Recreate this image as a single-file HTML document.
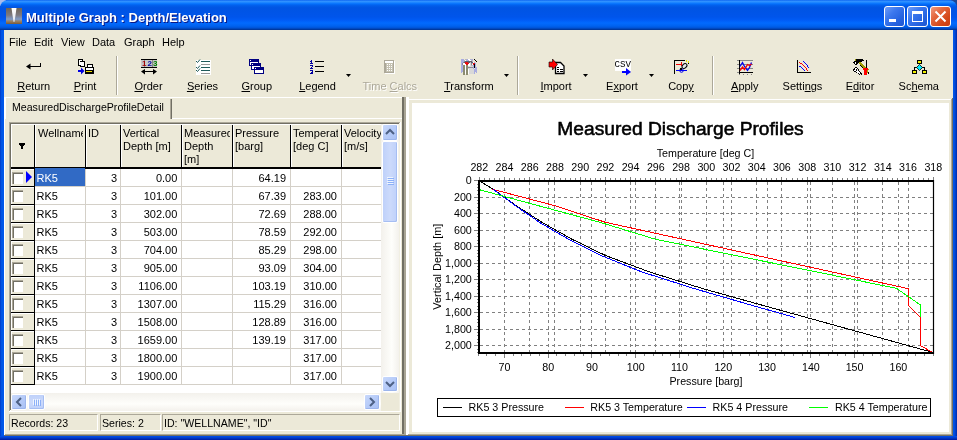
<!DOCTYPE html>
<html><head><meta charset="utf-8">
<style>
*{box-sizing:border-box}
html,body{margin:0;padding:0}
body{width:957px;height:440px;overflow:hidden;position:relative;background:linear-gradient(to right,#0038C8 0px,#0054E3 1.5px,#0058EE 4px,#0058EE 953px,#0048D8 955px,#0028A8 957px);font-family:"Liberation Sans",sans-serif;font-size:11px;color:#000}
.a{position:absolute}
#title{left:0;top:0;width:957px;height:30px;border-radius:8px 8px 0 0;
background:linear-gradient(to bottom,#0058EE 0px,#3593FF 1px,#288EFF 2px,#127DFF 3px,#036FFC 4px,#0262EE 5px,#0057E5 7px,#0054E3 8px,#0055EB 17px,#005BF5 20px,#026AFE 23px,#0062EF 26px,#0052D6 28px,#0040AB 29px,#003092 30px)}
#ttext{left:26px;top:10px;color:#fff;font-weight:bold;font-size:13px;text-shadow:1px 1px #0A1883;white-space:nowrap}
.tb{top:6px;width:21px;height:21px;border:1px solid #fff;border-radius:3px;
background:linear-gradient(135deg,#6F9DF7 0%,#3C78EE 35%,#2663E0 70%,#1F56D0 100%)}
#client{left:4px;top:30px;width:949px;height:406px;background:#ECE9D8}
.menu{top:36px;white-space:nowrap}
.lbl{top:80px;white-space:nowrap;text-align:center}
.sep{width:2px;top:56px;height:40px;border-left:1px solid #ACA899;border-right:1px solid #fff}
.t{white-space:nowrap;font-size:11px;line-height:13px}
.hd{overflow:hidden;line-height:13.2px}
#bot{left:0;top:436px;width:957px;height:4px;background:linear-gradient(to bottom,#0050F0,#0040D0 40%,#0028B0 80%,#0018A0)}
body{will-change:transform}
</style></head><body>

<div id="cornl" class="a" style="left:0;top:0;width:6px;height:6px;background:#A8BCEC"></div>
<div class="a" style="left:951px;top:0;width:6px;height:6px;background:#1E4594"></div>
<div id="title" class="a"></div>
<svg class="a" style="left:6px;top:8px" width="16" height="16">
<defs><linearGradient id="ig" x1="0" y1="0" x2="0" y2="1"><stop offset="0" stop-color="#6E6456"/><stop offset="0.45" stop-color="#7D7A80"/><stop offset="0.7" stop-color="#7F9BC8"/><stop offset="0.82" stop-color="#9A8468"/><stop offset="1" stop-color="#7A5A3A"/></linearGradient>
<linearGradient id="pg" x1="0" y1="0" x2="0" y2="1"><stop offset="0" stop-color="#fff"/><stop offset="0.8" stop-color="#E8ECF4"/><stop offset="1" stop-color="#C8D0E0"/></linearGradient></defs>
<rect width="16" height="16" fill="url(#ig)"/>
<polygon points="5.5,0 10.5,0 8.5,14 7.5,14" fill="url(#pg)"/>
</svg>
<div id="ttext" class="a">Multiple Graph : Depth/Elevation</div>
<div class="a tb" style="left:884px"></div>
<div class="a tb" style="left:907px"></div>
<div class="a tb" style="left:930px;background:linear-gradient(135deg,#F09A7E 0%,#E4683F 35%,#D5491A 70%,#C83C10 100%)"></div>
<svg class="a" style="left:884px;top:6px" width="67" height="21" shape-rendering="crispEdges">
<rect x="5" y="13" width="7" height="3" fill="#fff"/>
<rect x="28" y="5" width="11" height="3" fill="#fff"/><rect x="28" y="5" width="1" height="11" fill="#fff"/><rect x="38" y="5" width="1" height="11" fill="#fff"/><rect x="28" y="15" width="11" height="1" fill="#fff"/>
<path d="M51.5,5.5 L61.5,15.5 M61.5,5.5 L51.5,15.5" stroke="#fff" stroke-width="2" shape-rendering="auto"/>
</svg>
<div id="client" class="a"></div>
<div id="bot" class="a"></div>

<div class="a menu" style="left:9px">File</div>
<div class="a menu" style="left:34px">Edit</div>
<div class="a menu" style="left:61px">View</div>
<div class="a menu" style="left:92px">Data</div>
<div class="a menu" style="left:124px">Graph</div>
<div class="a menu" style="left:162px">Help</div>


<svg class="a" style="left:0;top:0" width="957" height="100" viewBox="0 0 957 100" shape-rendering="crispEdges">
<!-- Return -->
<g fill="#000"><rect x="30" y="66" width="11" height="1"/><rect x="40" y="63" width="1" height="4"/>
<polygon points="26,66.5 30.5,63.5 30.5,69.5" shape-rendering="auto"/></g>
<!-- Print -->
<g>
<rect x="78" y="59" width="5" height="7" fill="#000"/><rect x="79" y="60" width="3" height="5" fill="#fff"/>
<rect x="80" y="61" width="5" height="6" fill="#000"/><rect x="81" y="62" width="3" height="4" fill="#fff"/><rect x="80" y="62" width="1" height="3" fill="#fff"/>
<rect x="87" y="64" width="6" height="4" fill="#000"/><rect x="88" y="65" width="4" height="2" fill="#fff"/>
<rect x="85" y="67" width="9" height="7" rx="1" fill="#000"/>
<rect x="86" y="68" width="7" height="2" fill="#fff"/>
<rect x="86" y="71" width="6" height="1" fill="#F0E000"/>
<rect x="78" y="70" width="4" height="2" fill="#0000E0"/><polygon points="81,67.5 84.5,71 81,74.5" fill="#0000E0" shape-rendering="auto"/>
</g>
<!-- Order -->
<g>
<rect x="141" y="59" width="16" height="1" fill="#000"/>
<rect x="141" y="60" width="16" height="7" fill="#C8C8C8"/>
<rect x="144" y="60" width="1" height="7" fill="#888"/><rect x="152" y="60" width="1" height="7" fill="#888"/>
<rect x="141" y="67" width="16" height="1" fill="#000"/>
<text x="142" y="66" font-size="8" font-weight="bold" fill="#A00000" font-family="Liberation Sans" shape-rendering="auto">1</text>
<text x="147.5" y="66" font-size="8" font-weight="bold" fill="#0000A0" font-family="Liberation Sans">2</text>
<text x="153" y="66" font-size="8" font-weight="bold" fill="#008000" font-family="Liberation Sans">3</text>
<rect x="144" y="71" width="10" height="1" fill="#000"/>
<polygon points="141,71.5 145,69 145,74.5" fill="#000" shape-rendering="auto"/>
<polygon points="157,71.5 153,69 153,74.5" fill="#000" shape-rendering="auto"/>
</g>
<!-- Series -->
<g>
<rect x="196" y="60" width="15" height="15" fill="#fff"/>
<g fill="#1F5A5A"><rect x="201" y="61" width="9" height="1"/><rect x="201" y="67" width="9" height="1"/><rect x="201" y="70" width="9" height="1"/></g>
<g fill="#999"><rect x="201" y="64" width="9" height="1"/><rect x="201" y="73" width="9" height="1"/></g>
<g fill="none" stroke="#1F5A5A" stroke-width="1" shape-rendering="auto">
<path d="M196,61 l1.5,1.5 l2.5,-3"/><path d="M196,67 l1.5,1.5 l2.5,-3"/><path d="M196,70 l1.5,1.5 l2.5,-3"/></g>
</g>
<!-- Group -->
<g>
<rect x="249" y="59" width="10" height="7" fill="#000080"/><rect x="250" y="62" width="8" height="3" fill="#fff"/><rect x="250" y="60" width="1" height="1" fill="#fff"/>
<rect x="251" y="63" width="10" height="7" fill="#000080"/><rect x="252" y="66" width="8" height="3" fill="#fff"/><rect x="252" y="64" width="1" height="1" fill="#fff"/>
<rect x="254" y="67" width="10" height="7" fill="#000080"/><rect x="255" y="70" width="8" height="3" fill="#fff"/><rect x="255" y="68" width="1" height="1" fill="#fff"/>
</g>
<!-- Legend -->
<g>
<text x="309.5" y="74" font-size="5" font-weight="bold" fill="#0000A0" font-family="Liberation Sans" shape-rendering="auto" style="writing-mode:horizontal-tb"></text>
<rect x="310" y="60" width="3" height="14" fill="#ECE9D8"/>
<g fill="#0000A0"><rect x="311" y="60" width="1" height="4"/><rect x="310" y="63" width="3" height="1"/><rect x="310" y="61" width="1" height="1"/>
<rect x="310" y="65" width="3" height="1"/><rect x="312" y="66" width="1" height="1"/><rect x="311" y="67" width="1" height="1"/><rect x="310" y="68" width="3" height="1"/>
<rect x="310" y="70" width="3" height="1"/><rect x="312" y="71" width="1" height="1"/><rect x="311" y="72" width="2" height="1"/><rect x="310" y="73" width="3" height="1"/></g>
<g fill="#000"><rect x="315" y="61" width="9" height="1"/><rect x="315" y="66" width="9" height="1"/><rect x="315" y="71" width="9" height="1"/></g>
</g>
<!-- Time Calcs disabled -->
<g>
<rect x="385" y="61" width="10" height="13" fill="#fff"/>
<rect x="384" y="60" width="10" height="13" fill="#ACA899"/>
<rect x="385" y="61" width="8" height="2" fill="#fff"/>
<rect x="386" y="63" width="7" height="9" fill="#C5C2B2"/>
<g fill="#fff"><rect x="387" y="64" width="1" height="1"/><rect x="389" y="64" width="1" height="1"/><rect x="391" y="64" width="1" height="1"/>
<rect x="387" y="66" width="1" height="1"/><rect x="389" y="66" width="1" height="1"/><rect x="391" y="66" width="1" height="1"/>
<rect x="387" y="68" width="1" height="1"/><rect x="389" y="68" width="1" height="1"/><rect x="391" y="68" width="1" height="1"/>
<rect x="387" y="70" width="1" height="1"/><rect x="389" y="70" width="1" height="1"/><rect x="391" y="70" width="1" height="1"/></g>
</g>
<!-- Transform -->
<g><rect x="461" y="59" width="1" height="1" fill="#A8ACE0"/><rect x="462" y="59" width="1" height="1" fill="#A8ACE0"/><rect x="463" y="59" width="1" height="1" fill="#A8ACE0"/><rect x="465" y="59" width="1" height="1" fill="#B8B8C0"/><rect x="466" y="59" width="1" height="1" fill="#B8B8C0"/><rect x="467" y="59" width="1" height="1" fill="#A8ACE0"/><rect x="468" y="59" width="1" height="1" fill="#FFFFFF"/><rect x="469" y="59" width="1" height="1" fill="#FFFFFF"/><rect x="470" y="59" width="1" height="1" fill="#A8ACE0"/><rect x="471" y="59" width="1" height="1" fill="#B8B8C0"/><rect x="472" y="59" width="1" height="1" fill="#A8ACE0"/><rect x="474" y="59" width="1" height="1" fill="#000000"/><rect x="461" y="60" width="1" height="1" fill="#A8ACE0"/><rect x="462" y="60" width="1" height="1" fill="#A8ACE0"/><rect x="463" y="60" width="1" height="1" fill="#A8ACE0"/><rect x="464" y="60" width="1" height="1" fill="#B8B8C0"/><rect x="465" y="60" width="1" height="1" fill="#FFFFFF"/><rect x="466" y="60" width="1" height="1" fill="#B8B8C0"/><rect x="467" y="60" width="1" height="1" fill="#A8ACE0"/><rect x="468" y="60" width="1" height="1" fill="#A8ACE0"/><rect x="469" y="60" width="1" height="1" fill="#FFFFFF"/><rect x="470" y="60" width="1" height="1" fill="#FFFFFF"/><rect x="471" y="60" width="1" height="1" fill="#B8B8C0"/><rect x="472" y="60" width="1" height="1" fill="#A8ACE0"/><rect x="475" y="60" width="1" height="1" fill="#000000"/><rect x="461" y="61" width="1" height="1" fill="#A8ACE0"/><rect x="462" y="61" width="1" height="1" fill="#A8ACE0"/><rect x="463" y="61" width="1" height="1" fill="#A8ACE0"/><rect x="464" y="61" width="1" height="1" fill="#8A8A96"/><rect x="465" y="61" width="1" height="1" fill="#5E5E6E"/><rect x="466" y="61" width="1" height="1" fill="#5E5E6E"/><rect x="467" y="61" width="1" height="1" fill="#5E5E6E"/><rect x="468" y="61" width="1" height="1" fill="#5E5E6E"/><rect x="469" y="61" width="1" height="1" fill="#5E5E6E"/><rect x="470" y="61" width="1" height="1" fill="#5E5E6E"/><rect x="471" y="61" width="1" height="1" fill="#5E5E6E"/><rect x="472" y="61" width="1" height="1" fill="#B8B8C0"/><rect x="476" y="61" width="1" height="1" fill="#000000"/><rect x="461" y="62" width="1" height="1" fill="#A8ACE0"/><rect x="462" y="62" width="1" height="1" fill="#A8ACE0"/><rect x="463" y="62" width="1" height="1" fill="#8A8A96"/><rect x="464" y="62" width="1" height="1" fill="#5E5E6E"/><rect x="465" y="62" width="1" height="1" fill="#E81010"/><rect x="466" y="62" width="1" height="1" fill="#E81010"/><rect x="467" y="62" width="1" height="1" fill="#E81010"/><rect x="468" y="62" width="1" height="1" fill="#5E5E6E"/><rect x="469" y="62" width="1" height="1" fill="#5E5E6E"/><rect x="470" y="62" width="1" height="1" fill="#B8B8C0"/><rect x="471" y="62" width="1" height="1" fill="#5E5E6E"/><rect x="472" y="62" width="1" height="1" fill="#5E5E6E"/><rect x="473" y="62" width="1" height="1" fill="#FFFFFF"/><rect x="474" y="62" width="1" height="1" fill="#A8ACE0"/><rect x="461" y="63" width="1" height="1" fill="#A8ACE0"/><rect x="462" y="63" width="1" height="1" fill="#8A8A96"/><rect x="463" y="63" width="1" height="1" fill="#FFFFFF"/><rect x="464" y="63" width="1" height="1" fill="#FFFFFF"/><rect x="465" y="63" width="1" height="1" fill="#E81010"/><rect x="466" y="63" width="1" height="1" fill="#E81010"/><rect x="467" y="63" width="1" height="1" fill="#E81010"/><rect x="468" y="63" width="1" height="1" fill="#E81010"/><rect x="469" y="63" width="1" height="1" fill="#FFFFFF"/><rect x="470" y="63" width="1" height="1" fill="#D8D8D8"/><rect x="471" y="63" width="1" height="1" fill="#8A8A96"/><rect x="472" y="63" width="1" height="1" fill="#B8B8C0"/><rect x="473" y="63" width="1" height="1" fill="#E81010"/><rect x="474" y="63" width="1" height="1" fill="#E81010"/><rect x="475" y="63" width="1" height="1" fill="#A8ACE0"/><rect x="461" y="64" width="1" height="1" fill="#A8ACE0"/><rect x="462" y="64" width="1" height="1" fill="#8A8A96"/><rect x="463" y="64" width="1" height="1" fill="#FFFFFF"/><rect x="464" y="64" width="1" height="1" fill="#FFFFFF"/><rect x="465" y="64" width="1" height="1" fill="#FFFFFF"/><rect x="466" y="64" width="1" height="1" fill="#E81010"/><rect x="467" y="64" width="1" height="1" fill="#E81010"/><rect x="468" y="64" width="1" height="1" fill="#FFFFFF"/><rect x="469" y="64" width="1" height="1" fill="#FFFFFF"/><rect x="470" y="64" width="1" height="1" fill="#D8D8D8"/><rect x="471" y="64" width="1" height="1" fill="#8A8A96"/><rect x="472" y="64" width="1" height="1" fill="#FFFFFF"/><rect x="473" y="64" width="1" height="1" fill="#E81010"/><rect x="474" y="64" width="1" height="1" fill="#000000"/><rect x="475" y="64" width="1" height="1" fill="#A8ACE0"/><rect x="461" y="65" width="1" height="1" fill="#A8ACE0"/><rect x="462" y="65" width="1" height="1" fill="#A8ACE0"/><rect x="463" y="65" width="1" height="1" fill="#8C8C70"/><rect x="464" y="65" width="1" height="1" fill="#8C8C70"/><rect x="465" y="65" width="1" height="1" fill="#FFFFFF"/><rect x="466" y="65" width="1" height="1" fill="#8C8C70"/><rect x="467" y="65" width="1" height="1" fill="#8C8C70"/><rect x="468" y="65" width="1" height="1" fill="#FFFFFF"/><rect x="469" y="65" width="1" height="1" fill="#FFFFFF"/><rect x="470" y="65" width="1" height="1" fill="#D8D8D8"/><rect x="471" y="65" width="1" height="1" fill="#B8B8C0"/><rect x="472" y="65" width="1" height="1" fill="#B8B8C0"/><rect x="473" y="65" width="1" height="1" fill="#A8ACE0"/><rect x="474" y="65" width="1" height="1" fill="#000000"/><rect x="475" y="65" width="1" height="1" fill="#A8ACE0"/><rect x="461" y="66" width="1" height="1" fill="#A8ACE0"/><rect x="462" y="66" width="1" height="1" fill="#A8ACE0"/><rect x="463" y="66" width="1" height="1" fill="#8C8C70"/><rect x="464" y="66" width="1" height="1" fill="#8C8C70"/><rect x="465" y="66" width="1" height="1" fill="#FFFFFF"/><rect x="466" y="66" width="1" height="1" fill="#8C8C70"/><rect x="467" y="66" width="1" height="1" fill="#8C8C70"/><rect x="468" y="66" width="1" height="1" fill="#D8D8D8"/><rect x="469" y="66" width="1" height="1" fill="#D8D8D8"/><rect x="470" y="66" width="1" height="1" fill="#D8D8D8"/><rect x="471" y="66" width="1" height="1" fill="#D8D8D8"/><rect x="472" y="66" width="1" height="1" fill="#D8D8D8"/><rect x="473" y="66" width="1" height="1" fill="#A8ACE0"/><rect x="474" y="66" width="1" height="1" fill="#000000"/><rect x="475" y="66" width="1" height="1" fill="#A8ACE0"/><rect x="461" y="67" width="1" height="1" fill="#A8ACE0"/><rect x="462" y="67" width="1" height="1" fill="#A8ACE0"/><rect x="463" y="67" width="1" height="1" fill="#8C8C70"/><rect x="464" y="67" width="1" height="1" fill="#8C8C70"/><rect x="465" y="67" width="1" height="1" fill="#FFFFFF"/><rect x="466" y="67" width="1" height="1" fill="#8C8C70"/><rect x="467" y="67" width="1" height="1" fill="#8C8C70"/><rect x="468" y="67" width="1" height="1" fill="#8A8A96"/><rect x="469" y="67" width="1" height="1" fill="#8A8A96"/><rect x="470" y="67" width="1" height="1" fill="#8A8A96"/><rect x="471" y="67" width="1" height="1" fill="#8A8A96"/><rect x="472" y="67" width="1" height="1" fill="#8A8A96"/><rect x="473" y="67" width="1" height="1" fill="#A8ACE0"/><rect x="474" y="67" width="1" height="1" fill="#000000"/><rect x="475" y="67" width="1" height="1" fill="#A8ACE0"/><rect x="476" y="67" width="1" height="1" fill="#A8ACE0"/><rect x="461" y="68" width="1" height="1" fill="#A8ACE0"/><rect x="462" y="68" width="1" height="1" fill="#A8ACE0"/><rect x="463" y="68" width="1" height="1" fill="#8C8C70"/><rect x="464" y="68" width="1" height="1" fill="#8C8C70"/><rect x="465" y="68" width="1" height="1" fill="#FFFFFF"/><rect x="466" y="68" width="1" height="1" fill="#8C8C70"/><rect x="467" y="68" width="1" height="1" fill="#8C8C70"/><rect x="468" y="68" width="1" height="1" fill="#D8D8D8"/><rect x="469" y="68" width="1" height="1" fill="#D8D8D8"/><rect x="470" y="68" width="1" height="1" fill="#D8D8D8"/><rect x="471" y="68" width="1" height="1" fill="#D8D8D8"/><rect x="472" y="68" width="1" height="1" fill="#D8D8D8"/><rect x="473" y="68" width="1" height="1" fill="#A8ACE0"/><rect x="475" y="68" width="1" height="1" fill="#A8ACE0"/><rect x="476" y="68" width="1" height="1" fill="#A8ACE0"/><rect x="461" y="69" width="1" height="1" fill="#A8ACE0"/><rect x="462" y="69" width="1" height="1" fill="#A8ACE0"/><rect x="463" y="69" width="1" height="1" fill="#8C8C70"/><rect x="464" y="69" width="1" height="1" fill="#8C8C70"/><rect x="465" y="69" width="1" height="1" fill="#FFFFFF"/><rect x="466" y="69" width="1" height="1" fill="#8C8C70"/><rect x="467" y="69" width="1" height="1" fill="#8C8C70"/><rect x="468" y="69" width="1" height="1" fill="#FFFFFF"/><rect x="469" y="69" width="1" height="1" fill="#D8D8D8"/><rect x="470" y="69" width="1" height="1" fill="#D8D8D8"/><rect x="471" y="69" width="1" height="1" fill="#D8D8D8"/><rect x="472" y="69" width="1" height="1" fill="#D8D8D8"/><rect x="473" y="69" width="1" height="1" fill="#D8D8D8"/><rect x="474" y="69" width="1" height="1" fill="#A8ACE0"/><rect x="475" y="69" width="1" height="1" fill="#A8ACE0"/><rect x="476" y="69" width="1" height="1" fill="#A8ACE0"/><rect x="461" y="70" width="1" height="1" fill="#A8ACE0"/><rect x="462" y="70" width="1" height="1" fill="#A8ACE0"/><rect x="463" y="70" width="1" height="1" fill="#8C8C70"/><rect x="464" y="70" width="1" height="1" fill="#8C8C70"/><rect x="465" y="70" width="1" height="1" fill="#FFFFFF"/><rect x="466" y="70" width="1" height="1" fill="#8C8C70"/><rect x="467" y="70" width="1" height="1" fill="#8C8C70"/><rect x="468" y="70" width="1" height="1" fill="#FFFFFF"/><rect x="469" y="70" width="1" height="1" fill="#D8D8D8"/><rect x="470" y="70" width="1" height="1" fill="#D8D8D8"/><rect x="471" y="70" width="1" height="1" fill="#D8D8D8"/><rect x="472" y="70" width="1" height="1" fill="#D8D8D8"/><rect x="473" y="70" width="1" height="1" fill="#D8D8D8"/><rect x="474" y="70" width="1" height="1" fill="#A8ACE0"/><rect x="475" y="70" width="1" height="1" fill="#A8ACE0"/><rect x="476" y="70" width="1" height="1" fill="#A8ACE0"/><rect x="461" y="71" width="1" height="1" fill="#A8ACE0"/><rect x="462" y="71" width="1" height="1" fill="#A8ACE0"/><rect x="463" y="71" width="1" height="1" fill="#8C8C70"/><rect x="464" y="71" width="1" height="1" fill="#8C8C70"/><rect x="465" y="71" width="1" height="1" fill="#FFFFFF"/><rect x="466" y="71" width="1" height="1" fill="#8C8C70"/><rect x="467" y="71" width="1" height="1" fill="#8C8C70"/><rect x="468" y="71" width="1" height="1" fill="#FFFFFF"/><rect x="469" y="71" width="1" height="1" fill="#D8D8D8"/><rect x="470" y="71" width="1" height="1" fill="#D8D8D8"/><rect x="471" y="71" width="1" height="1" fill="#D8D8D8"/><rect x="472" y="71" width="1" height="1" fill="#D8D8D8"/><rect x="473" y="71" width="1" height="1" fill="#D8D8D8"/><rect x="474" y="71" width="1" height="1" fill="#A8ACE0"/><rect x="475" y="71" width="1" height="1" fill="#A8ACE0"/><rect x="476" y="71" width="1" height="1" fill="#A8ACE0"/><rect x="461" y="72" width="1" height="1" fill="#A8ACE0"/><rect x="463" y="72" width="1" height="1" fill="#8C8C70"/><rect x="464" y="72" width="1" height="1" fill="#8C8C70"/><rect x="465" y="72" width="1" height="1" fill="#FFFFFF"/><rect x="466" y="72" width="1" height="1" fill="#8C8C70"/><rect x="467" y="72" width="1" height="1" fill="#8C8C70"/><rect x="468" y="72" width="1" height="1" fill="#FFFFFF"/><rect x="469" y="72" width="1" height="1" fill="#D8D8D8"/><rect x="470" y="72" width="1" height="1" fill="#D8D8D8"/><rect x="471" y="72" width="1" height="1" fill="#D8D8D8"/><rect x="472" y="72" width="1" height="1" fill="#D8D8D8"/><rect x="473" y="72" width="1" height="1" fill="#D8D8D8"/><rect x="474" y="72" width="1" height="1" fill="#A8ACE0"/><rect x="476" y="72" width="1" height="1" fill="#A8ACE0"/><rect x="463" y="73" width="1" height="1" fill="#8C8C70"/><rect x="464" y="73" width="1" height="1" fill="#8C8C70"/><rect x="465" y="73" width="1" height="1" fill="#FFFFFF"/><rect x="466" y="73" width="1" height="1" fill="#8C8C70"/><rect x="467" y="73" width="1" height="1" fill="#8C8C70"/><rect x="468" y="73" width="1" height="1" fill="#FFFFFF"/><rect x="469" y="73" width="1" height="1" fill="#D8D8D8"/><rect x="470" y="73" width="1" height="1" fill="#D8D8D8"/><rect x="471" y="73" width="1" height="1" fill="#D8D8D8"/><rect x="472" y="73" width="1" height="1" fill="#D8D8D8"/><rect x="473" y="73" width="1" height="1" fill="#D8D8D8"/><rect x="474" y="73" width="1" height="1" fill="#A8ACE0"/><rect x="463" y="74" width="1" height="1" fill="#8C8C70"/><rect x="464" y="74" width="1" height="1" fill="#8C8C70"/><rect x="466" y="74" width="1" height="1" fill="#8C8C70"/><rect x="467" y="74" width="1" height="1" fill="#8C8C70"/></g>
<!-- Dropdown arrows -->
<g fill="#000">
<polygon points="346,74 351,74 348.5,77" shape-rendering="auto"/>
<polygon points="504,74 509,74 506.5,77" shape-rendering="auto"/>
<polygon points="583,74 588,74 585.5,77" shape-rendering="auto"/>
<polygon points="649,74 654,74 651.5,77" shape-rendering="auto"/>
</g>
<!-- Import -->
<g>
<path d="M555.5,62.5h5l3.5,3.5v7.5h-8.5z" fill="#fff" stroke="#000" stroke-width="1.3" shape-rendering="auto"/>
<g fill="#000"><rect x="557" y="67" width="2" height="1"/><rect x="557" y="69" width="2" height="1"/><rect x="560" y="69" width="3" height="1"/><rect x="557" y="71" width="2" height="1"/><rect x="560" y="71" width="3" height="1"/></g>
<polygon points="549,62 552.5,62 552.5,59 557.5,64.5 552.5,70 552.5,67 549,67" fill="#FF0000" stroke="#000" stroke-width="0.6" shape-rendering="auto"/>
</g>
<!-- Export -->
<g>
<rect x="615" y="59" width="16" height="12" fill="#fff"/>
<text x="614.6" y="67" font-size="8.5" fill="#000" font-family="Liberation Mono" shape-rendering="auto" textLength="16.5" lengthAdjust="spacingAndGlyphs">CSV</text>
<rect x="622" y="71" width="5" height="2" fill="#0000FF"/>
<polygon points="626,68 631,72 626,75.5" fill="#0000FF" shape-rendering="auto"/>
</g>
<!-- Copy -->
<g>
<rect x="674" y="60" width="1" height="14" fill="#000"/><rect x="674" y="60" width="11" height="1" fill="#000"/>
<rect x="676" y="64" width="6" height="1" fill="#F00000"/><rect x="681" y="62" width="1" height="4" fill="#F00000"/>
<rect x="676" y="70" width="11" height="1" fill="#0000F0"/>
<circle cx="681.5" cy="70.5" r="1.8" fill="none" stroke="#0000F0" stroke-width="1" shape-rendering="auto"/>
<ellipse cx="684.5" cy="66" rx="2.8" ry="2" transform="rotate(-45 684.5 66)" fill="#E8E8E8" stroke="#000" stroke-width="1" shape-rendering="auto"/>
<rect x="680" y="68" width="2" height="2" fill="#000"/>
<rect x="686" y="60" width="1" height="2" fill="#E8E000"/><rect x="688" y="61" width="1" height="3" fill="#E8E000"/><rect x="688" y="63" width="1" height="1" fill="#000"/>
</g>
<!-- Apply -->
<g>
<g fill="#888"><rect x="737" y="60" width="16" height="1"/><rect x="737" y="64" width="16" height="1"/><rect x="737" y="68" width="16" height="1"/><rect x="737" y="72" width="16" height="1"/></g>
<rect x="739" y="60" width="1" height="14" fill="#000"/><rect x="739" y="72" width="14" height="1" fill="#000"/>
<g fill="#888"><rect x="739" y="74" width="1" height="1"/><rect x="743" y="74" width="1" height="1"/><rect x="747" y="74" width="1" height="1"/><rect x="751" y="74" width="1" height="1"/></g>
<polyline points="740,66.5 742.5,62.5 744.5,66.5 747.5,70.5 749.5,67.5 751.5,62.5" fill="none" stroke="#0000F0" stroke-width="1.3" shape-rendering="auto"/>
<polyline points="740,70.5 742.5,67 744.5,69.5 747.5,64.5 749.5,65.5 751.5,64" fill="none" stroke="#F00000" stroke-width="1.3" shape-rendering="auto"/>
</g>
<!-- Settings -->
<g><rect x="797" y="60" width="1" height="13" fill="#000"/><rect x="797" y="72" width="14" height="1" fill="#000"/><rect x="799" y="62" width="1" height="1" fill="#FF0000"/><rect x="800" y="63" width="1" height="1" fill="#FF0000"/><rect x="801" y="63" width="1" height="1" fill="#FF0000"/><rect x="802" y="64" width="1" height="1" fill="#FF0000"/><rect x="803" y="65" width="1" height="1" fill="#FF0000"/><rect x="804" y="66" width="1" height="1" fill="#FF0000"/><rect x="805" y="67" width="1" height="1" fill="#FF0000"/><rect x="806" y="68" width="1" height="1" fill="#FF0000"/><rect x="806" y="69" width="1" height="1" fill="#FF0000"/><rect x="807" y="70" width="1" height="1" fill="#FF0000"/><rect x="803" y="61" width="1" height="1" fill="#0000FF"/><rect x="804" y="62" width="1" height="1" fill="#0000FF"/><rect x="805" y="63" width="1" height="1" fill="#0000FF"/><rect x="806" y="64" width="1" height="1" fill="#0000FF"/><rect x="807" y="65" width="1" height="1" fill="#0000FF"/><rect x="807" y="66" width="1" height="1" fill="#0000FF"/><rect x="808" y="67" width="1" height="1" fill="#0000FF"/><rect x="799" y="66" width="1" height="1" fill="#0000FF"/><rect x="800" y="66" width="1" height="1" fill="#0000FF"/><rect x="801" y="67" width="1" height="1" fill="#0000FF"/><rect x="802" y="68" width="1" height="1" fill="#0000FF"/><rect x="803" y="69" width="1" height="1" fill="#0000FF"/><rect x="804" y="70" width="1" height="1" fill="#0000FF"/></g>
<!-- Editor -->
<g><rect x="855" y="59" width="1" height="1" fill="#A0A000"/><rect x="856" y="59" width="1" height="1" fill="#000000"/><rect x="857" y="59" width="1" height="1" fill="#000000"/><rect x="858" y="59" width="1" height="1" fill="#000000"/><rect x="859" y="59" width="1" height="1" fill="#000000"/><rect x="860" y="59" width="1" height="1" fill="#000000"/><rect x="861" y="59" width="1" height="1" fill="#000000"/><rect x="862" y="59" width="1" height="1" fill="#000000"/><rect x="855" y="60" width="1" height="1" fill="#A0A000"/><rect x="856" y="60" width="1" height="1" fill="#000000"/><rect x="857" y="60" width="1" height="1" fill="#000000"/><rect x="858" y="60" width="1" height="1" fill="#000000"/><rect x="859" y="60" width="1" height="1" fill="#000000"/><rect x="860" y="60" width="1" height="1" fill="#000000"/><rect x="861" y="60" width="1" height="1" fill="#000000"/><rect x="862" y="60" width="1" height="1" fill="#000000"/><rect x="863" y="60" width="1" height="1" fill="#000000"/><rect x="866" y="60" width="1" height="1" fill="#000000"/><rect x="854" y="61" width="1" height="1" fill="#000000"/><rect x="855" y="61" width="1" height="1" fill="#000000"/><rect x="856" y="61" width="1" height="1" fill="#000000"/><rect x="857" y="61" width="1" height="1" fill="#000000"/><rect x="858" y="61" width="1" height="1" fill="#000000"/><rect x="859" y="61" width="1" height="1" fill="#000000"/><rect x="860" y="61" width="1" height="1" fill="#000000"/><rect x="861" y="61" width="1" height="1" fill="#000000"/><rect x="866" y="61" width="1" height="1" fill="#000000"/><rect x="853" y="62" width="1" height="1" fill="#000000"/><rect x="854" y="62" width="1" height="1" fill="#000000"/><rect x="855" y="62" width="1" height="1" fill="#FFFFFF"/><rect x="856" y="62" width="1" height="1" fill="#000000"/><rect x="857" y="62" width="1" height="1" fill="#000000"/><rect x="858" y="62" width="1" height="1" fill="#000000"/><rect x="859" y="62" width="1" height="1" fill="#A0A000"/><rect x="860" y="62" width="1" height="1" fill="#A0A000"/><rect x="866" y="62" width="1" height="1" fill="#000000"/><rect x="854" y="63" width="1" height="1" fill="#000000"/><rect x="855" y="63" width="1" height="1" fill="#FFFFFF"/><rect x="856" y="63" width="1" height="1" fill="#000000"/><rect x="857" y="63" width="1" height="1" fill="#000000"/><rect x="859" y="63" width="1" height="1" fill="#A0A000"/><rect x="860" y="63" width="1" height="1" fill="#A0A000"/><rect x="861" y="63" width="1" height="1" fill="#A0A000"/><rect x="866" y="63" width="1" height="1" fill="#000000"/><rect x="855" y="64" width="1" height="1" fill="#000000"/><rect x="856" y="64" width="1" height="1" fill="#000000"/><rect x="860" y="64" width="1" height="1" fill="#A0A000"/><rect x="861" y="64" width="1" height="1" fill="#A0A000"/><rect x="862" y="64" width="1" height="1" fill="#A0A000"/><rect x="866" y="64" width="1" height="1" fill="#000000"/><rect x="860" y="65" width="1" height="1" fill="#000000"/><rect x="861" y="65" width="1" height="1" fill="#A0A000"/><rect x="862" y="65" width="1" height="1" fill="#A0A000"/><rect x="863" y="65" width="1" height="1" fill="#A0A000"/><rect x="866" y="65" width="1" height="1" fill="#000000"/><rect x="861" y="66" width="1" height="1" fill="#000000"/><rect x="862" y="66" width="1" height="1" fill="#A0A000"/><rect x="863" y="66" width="1" height="1" fill="#A0A000"/><rect x="864" y="66" width="1" height="1" fill="#A0A000"/><rect x="866" y="66" width="1" height="1" fill="#000000"/><rect x="855" y="67" width="1" height="1" fill="#000000"/><rect x="856" y="67" width="1" height="1" fill="#000000"/><rect x="862" y="67" width="1" height="1" fill="#000000"/><rect x="863" y="67" width="1" height="1" fill="#A0A000"/><rect x="864" y="67" width="1" height="1" fill="#A0A000"/><rect x="865" y="67" width="1" height="1" fill="#A0A000"/><rect x="866" y="67" width="1" height="1" fill="#000000"/><rect x="854" y="68" width="1" height="1" fill="#000000"/><rect x="855" y="68" width="1" height="1" fill="#FFFFFF"/><rect x="856" y="68" width="1" height="1" fill="#FFFFFF"/><rect x="857" y="68" width="1" height="1" fill="#000000"/><rect x="863" y="68" width="1" height="1" fill="#FF0000"/><rect x="864" y="68" width="1" height="1" fill="#FF0000"/><rect x="865" y="68" width="1" height="1" fill="#FF0000"/><rect x="866" y="68" width="1" height="1" fill="#FF0000"/><rect x="867" y="68" width="1" height="1" fill="#FF0000"/><rect x="853" y="69" width="1" height="1" fill="#000000"/><rect x="854" y="69" width="1" height="1" fill="#000000"/><rect x="855" y="69" width="1" height="1" fill="#FFFFFF"/><rect x="856" y="69" width="1" height="1" fill="#000000"/><rect x="858" y="69" width="1" height="1" fill="#000000"/><rect x="863" y="69" width="1" height="1" fill="#FF0000"/><rect x="864" y="69" width="1" height="1" fill="#FF0000"/><rect x="865" y="69" width="1" height="1" fill="#FF0000"/><rect x="866" y="69" width="1" height="1" fill="#FF0000"/><rect x="867" y="69" width="1" height="1" fill="#FF0000"/><rect x="868" y="69" width="1" height="1" fill="#A0A000"/><rect x="853" y="70" width="1" height="1" fill="#000000"/><rect x="854" y="70" width="1" height="1" fill="#FFFFFF"/><rect x="855" y="70" width="1" height="1" fill="#FFFFFF"/><rect x="856" y="70" width="1" height="1" fill="#000000"/><rect x="857" y="70" width="1" height="1" fill="#FFFFFF"/><rect x="858" y="70" width="1" height="1" fill="#000000"/><rect x="864" y="70" width="1" height="1" fill="#FF0000"/><rect x="865" y="70" width="1" height="1" fill="#FF0000"/><rect x="866" y="70" width="1" height="1" fill="#FF0000"/><rect x="867" y="70" width="1" height="1" fill="#A0A000"/><rect x="854" y="71" width="1" height="1" fill="#000000"/><rect x="855" y="71" width="1" height="1" fill="#000000"/><rect x="856" y="71" width="1" height="1" fill="#FFFFFF"/><rect x="857" y="71" width="1" height="1" fill="#FFFFFF"/><rect x="858" y="71" width="1" height="1" fill="#FFFFFF"/><rect x="859" y="71" width="1" height="1" fill="#000000"/><rect x="864" y="71" width="1" height="1" fill="#FF0000"/><rect x="865" y="71" width="1" height="1" fill="#FF0000"/><rect x="866" y="71" width="1" height="1" fill="#FF0000"/><rect x="867" y="71" width="1" height="1" fill="#A0A000"/><rect x="856" y="72" width="1" height="1" fill="#000000"/><rect x="857" y="72" width="1" height="1" fill="#FFFFFF"/><rect x="858" y="72" width="1" height="1" fill="#FFFFFF"/><rect x="859" y="72" width="1" height="1" fill="#FFFFFF"/><rect x="860" y="72" width="1" height="1" fill="#000000"/><rect x="864" y="72" width="1" height="1" fill="#FF0000"/><rect x="865" y="72" width="1" height="1" fill="#FF0000"/><rect x="866" y="72" width="1" height="1" fill="#FF0000"/><rect x="867" y="72" width="1" height="1" fill="#A0A000"/><rect x="868" y="72" width="1" height="1" fill="#000000"/><rect x="858" y="73" width="1" height="1" fill="#000000"/><rect x="859" y="73" width="1" height="1" fill="#FFFFFF"/><rect x="860" y="73" width="1" height="1" fill="#000000"/><rect x="861" y="73" width="1" height="1" fill="#000000"/><rect x="864" y="73" width="1" height="1" fill="#FF0000"/><rect x="865" y="73" width="1" height="1" fill="#FF0000"/><rect x="866" y="73" width="1" height="1" fill="#FF0000"/><rect x="868" y="73" width="1" height="1" fill="#000000"/><rect x="859" y="74" width="1" height="1" fill="#000000"/><rect x="861" y="74" width="1" height="1" fill="#000000"/><rect x="864" y="74" width="1" height="1" fill="#FF0000"/><rect x="865" y="74" width="1" height="1" fill="#FF0000"/><rect x="866" y="74" width="1" height="1" fill="#FF0000"/></g>
<!-- Schema -->
<g>
<rect x="917" y="60" width="5" height="4" fill="#000"/><rect x="918" y="61" width="3" height="2" fill="#F0F000"/>
<rect x="912" y="70" width="5" height="4" fill="#000"/><rect x="913" y="71" width="3" height="2" fill="#F0F000"/>
<rect x="922" y="70" width="5" height="4" fill="#000"/><rect x="923" y="71" width="3" height="2" fill="#F0F000"/>
<rect x="914" y="67" width="1" height="3" fill="#000"/><rect x="914" y="67" width="3" height="1" fill="#000"/>
<rect x="924" y="67" width="1" height="3" fill="#000"/><rect x="922" y="67" width="3" height="1" fill="#000"/>
<polygon points="919.5,64.5 922.5,67.5 919.5,70.5 916.5,67.5" fill="#00E8FF" stroke="#000" stroke-width="0.8" shape-rendering="auto"/>
</g>
<!-- separators -->
<rect x="116" y="56" width="1" height="39" fill="#ACA899"/><rect x="117" y="56" width="1" height="39" fill="#fff"/>
<rect x="517" y="56" width="1" height="39" fill="#ACA899"/><rect x="518" y="56" width="1" height="39" fill="#fff"/>
<rect x="712" y="56" width="1" height="39" fill="#ACA899"/><rect x="713" y="56" width="1" height="39" fill="#fff"/>
</svg>
<div class="a lbl" style="left:-6.3px;width:80px"><u>R</u>eturn</div>
<div class="a lbl" style="left:45.0px;width:80px"><u>P</u>rint</div>
<div class="a lbl" style="left:108.5px;width:80px"><u>O</u>rder</div>
<div class="a lbl" style="left:162.5px;width:80px"><u>S</u>eries</div>
<div class="a lbl" style="left:216.8px;width:80px"><u>G</u>roup</div>
<div class="a lbl" style="left:277.5px;width:80px"><u>L</u>egend</div>
<div class="a lbl" style="left:349.8px;width:80px;color:#ACA899;text-shadow:1px 1px #fff">Time <u>C</u>alcs</div>
<div class="a lbl" style="left:428.9px;width:80px"><u>T</u>ransform</div>
<div class="a lbl" style="left:516.1px;width:80px"><u>I</u>mport</div>
<div class="a lbl" style="left:582.0px;width:80px">E<u>x</u>port</div>
<div class="a lbl" style="left:641.0px;width:80px">Cop<u>y</u></div>
<div class="a lbl" style="left:704.8px;width:80px"><u>A</u>pply</div>
<div class="a lbl" style="left:762.5px;width:80px">Setti<u>n</u>gs</div>
<div class="a lbl" style="left:820.0px;width:80px">E<u>d</u>itor</div>
<div class="a lbl" style="left:878.8px;width:80px">Sc<u>h</u>ema</div>
<div class="a" style="left:4px;top:97px;width:1px;height:338px;background:#fff"></div>
<div class="a" style="left:4px;top:97px;width:400px;height:1px;background:#fff"></div>
<div class="a" style="left:5px;top:98px;width:1px;height:21px;background:#fff"></div>
<div class="a" style="left:170px;top:99px;width:1px;height:20px;background:#ACA899"></div>
<div class="a" style="left:171px;top:99px;width:1px;height:20px;background:#716F64"></div>
<div class="a t" style="left:12px;top:101px;font-size:10.6px;letter-spacing:0px">MeasuredDischargeProfileDetail</div>
<div class="a" style="left:172px;top:118px;width:231px;height:1px;background:#fff"></div>
<div class="a" style="left:5px;top:118px;width:1px;height:1px;background:#fff"></div>
<div class="a" style="left:402px;top:97px;width:2px;height:339px;background:#716F64"></div>
<div class="a" style="left:404px;top:97px;width:2px;height:339px;background:#A9A595"></div>
<div class="a" style="left:5px;top:434px;width:399px;height:1px;background:#ACA899"></div>
<div class="a" style="left:4px;top:435px;width:402px;height:1px;background:#716F64"></div>
<div class="a" style="left:9px;top:122px;width:392px;height:290px;background:#fff"></div>
<div class="a" style="left:9px;top:122px;width:391px;height:1px;background:#ACA899"></div>
<div class="a" style="left:9px;top:122px;width:1px;height:289px;background:#ACA899"></div>
<div class="a" style="left:10px;top:123px;width:389px;height:1px;background:#716F64"></div>
<div class="a" style="left:10px;top:123px;width:1px;height:287px;background:#716F64"></div>
<div class="a" style="left:9px;top:411px;width:392px;height:1px;background:#fff"></div>
<div class="a" style="left:400px;top:122px;width:1px;height:290px;background:#fff"></div>
<div class="a" style="left:399px;top:123px;width:1px;height:288px;background:#F1EFE2"></div>
<div class="a" style="left:11px;top:124px;width:370px;height:44px;background:#ECE9D8"></div>
<div class="a" style="left:34px;top:124px;width:1px;height:44px;background:#000"></div>
<div class="a" style="left:35px;top:124px;width:1px;height:44px;background:#fff"></div>
<div class="a" style="left:85px;top:124px;width:1px;height:44px;background:#000"></div>
<div class="a" style="left:86px;top:124px;width:1px;height:44px;background:#fff"></div>
<div class="a" style="left:120px;top:124px;width:1px;height:44px;background:#000"></div>
<div class="a" style="left:121px;top:124px;width:1px;height:44px;background:#fff"></div>
<div class="a" style="left:181px;top:124px;width:1px;height:44px;background:#000"></div>
<div class="a" style="left:182px;top:124px;width:1px;height:44px;background:#fff"></div>
<div class="a" style="left:232px;top:124px;width:1px;height:44px;background:#000"></div>
<div class="a" style="left:233px;top:124px;width:1px;height:44px;background:#fff"></div>
<div class="a" style="left:290px;top:124px;width:1px;height:44px;background:#000"></div>
<div class="a" style="left:291px;top:124px;width:1px;height:44px;background:#fff"></div>
<div class="a" style="left:341px;top:124px;width:1px;height:44px;background:#000"></div>
<div class="a" style="left:342px;top:124px;width:1px;height:44px;background:#fff"></div>
<div class="a" style="left:11px;top:124px;width:370px;height:1px;background:#fff"></div>
<div class="a" style="left:11px;top:124px;width:1px;height:44px;background:#fff"></div>
<div class="a" style="left:11px;top:167px;width:370px;height:2px;background:#000"></div>
<div class="a t hd" style="left:38px;top:127px;width:45px">Wellname</div>
<div class="a t hd" style="left:88px;top:127px;width:32px">ID</div>
<div class="a t hd" style="left:123px;top:127px;width:58px">Vertical<br>Depth [m]</div>
<div class="a t hd" style="left:184px;top:127px;width:46px">Measured<br>Depth<br>[m]</div>
<div class="a t hd" style="left:235px;top:127px;width:55px">Pressure<br>[barg]</div>
<div class="a t hd" style="left:293px;top:127px;width:45px">Temperature<br>[deg C]</div>
<div class="a t hd" style="left:344px;top:127px;width:37px">Velocity<br>[m/s]</div>
<svg class="a" style="left:17px;top:142px" width="10" height="10" shape-rendering="crispEdges"><rect x="2" y="1" width="6" height="1" fill="#000"/><rect x="2" y="2" width="6" height="1" fill="#000"/><rect x="3" y="3" width="4" height="1" fill="#000"/><rect x="4" y="4" width="2" height="3" fill="#000"/></svg>
<div class="a" style="left:11px;top:169px;width:23px;height:17px;background:#ECE9D8"></div>
<div class="a" style="left:11px;top:169px;width:23px;height:1px;background:#fff"></div>
<div class="a" style="left:11px;top:169px;width:1px;height:17px;background:#fff"></div>
<div class="a" style="left:11px;top:186px;width:23px;height:1px;background:#000"></div>
<div class="a" style="left:34px;top:168px;width:1px;height:19px;background:#000"></div>
<div class="a" style="left:12px;top:172px;width:11px;height:12px;background:#fff;border-top:1px solid #ACA899;border-left:1px solid #ACA899;box-shadow:inset 1px 1px #716F64"></div>
<div class="a" style="left:35px;top:186px;width:346px;height:1px;background:#D4D0C8"></div>
<div class="a" style="left:85px;top:169px;width:1px;height:17px;background:#D4D0C8"></div>
<div class="a" style="left:120px;top:169px;width:1px;height:17px;background:#D4D0C8"></div>
<div class="a" style="left:181px;top:169px;width:1px;height:17px;background:#D4D0C8"></div>
<div class="a" style="left:232px;top:169px;width:1px;height:17px;background:#D4D0C8"></div>
<div class="a" style="left:290px;top:169px;width:1px;height:17px;background:#D4D0C8"></div>
<div class="a" style="left:341px;top:169px;width:1px;height:17px;background:#D4D0C8"></div>
<div class="a" style="left:35px;top:168px;width:50px;height:18px;background:#316AC5"></div>
<svg class="a" style="left:26px;top:171px" width="8" height="12"><polygon points="0,0 6,6 0,12" fill="#0000FF"/></svg>
<div class="a t" style="left:36.5px;top:172px;color:#fff">RK5</div>
<div class="a t" style="left:37px;top:172px;width:80px;text-align:right">3</div>
<div class="a t" style="left:97.30000000000001px;top:172px;width:80px;text-align:right">0.00</div>
<div class="a t" style="left:206px;top:172px;width:80px;text-align:right">64.19</div>
<div class="a" style="left:11px;top:187px;width:23px;height:17px;background:#ECE9D8"></div>
<div class="a" style="left:11px;top:187px;width:23px;height:1px;background:#fff"></div>
<div class="a" style="left:11px;top:187px;width:1px;height:17px;background:#fff"></div>
<div class="a" style="left:11px;top:204px;width:23px;height:1px;background:#000"></div>
<div class="a" style="left:34px;top:186px;width:1px;height:19px;background:#000"></div>
<div class="a" style="left:12px;top:190px;width:11px;height:12px;background:#fff;border-top:1px solid #ACA899;border-left:1px solid #ACA899;box-shadow:inset 1px 1px #716F64"></div>
<div class="a" style="left:35px;top:204px;width:346px;height:1px;background:#D4D0C8"></div>
<div class="a" style="left:85px;top:187px;width:1px;height:17px;background:#D4D0C8"></div>
<div class="a" style="left:120px;top:187px;width:1px;height:17px;background:#D4D0C8"></div>
<div class="a" style="left:181px;top:187px;width:1px;height:17px;background:#D4D0C8"></div>
<div class="a" style="left:232px;top:187px;width:1px;height:17px;background:#D4D0C8"></div>
<div class="a" style="left:290px;top:187px;width:1px;height:17px;background:#D4D0C8"></div>
<div class="a" style="left:341px;top:187px;width:1px;height:17px;background:#D4D0C8"></div>
<div class="a t" style="left:36.5px;top:190px;">RK5</div>
<div class="a t" style="left:37px;top:190px;width:80px;text-align:right">3</div>
<div class="a t" style="left:97.30000000000001px;top:190px;width:80px;text-align:right">101.00</div>
<div class="a t" style="left:206px;top:190px;width:80px;text-align:right">67.39</div>
<div class="a t" style="left:257px;top:190px;width:80px;text-align:right">283.00</div>
<div class="a" style="left:11px;top:205px;width:23px;height:17px;background:#ECE9D8"></div>
<div class="a" style="left:11px;top:205px;width:23px;height:1px;background:#fff"></div>
<div class="a" style="left:11px;top:205px;width:1px;height:17px;background:#fff"></div>
<div class="a" style="left:11px;top:222px;width:23px;height:1px;background:#000"></div>
<div class="a" style="left:34px;top:204px;width:1px;height:19px;background:#000"></div>
<div class="a" style="left:12px;top:208px;width:11px;height:12px;background:#fff;border-top:1px solid #ACA899;border-left:1px solid #ACA899;box-shadow:inset 1px 1px #716F64"></div>
<div class="a" style="left:35px;top:222px;width:346px;height:1px;background:#D4D0C8"></div>
<div class="a" style="left:85px;top:205px;width:1px;height:17px;background:#D4D0C8"></div>
<div class="a" style="left:120px;top:205px;width:1px;height:17px;background:#D4D0C8"></div>
<div class="a" style="left:181px;top:205px;width:1px;height:17px;background:#D4D0C8"></div>
<div class="a" style="left:232px;top:205px;width:1px;height:17px;background:#D4D0C8"></div>
<div class="a" style="left:290px;top:205px;width:1px;height:17px;background:#D4D0C8"></div>
<div class="a" style="left:341px;top:205px;width:1px;height:17px;background:#D4D0C8"></div>
<div class="a t" style="left:36.5px;top:208px;">RK5</div>
<div class="a t" style="left:37px;top:208px;width:80px;text-align:right">3</div>
<div class="a t" style="left:97.30000000000001px;top:208px;width:80px;text-align:right">302.00</div>
<div class="a t" style="left:206px;top:208px;width:80px;text-align:right">72.69</div>
<div class="a t" style="left:257px;top:208px;width:80px;text-align:right">288.00</div>
<div class="a" style="left:11px;top:223px;width:23px;height:17px;background:#ECE9D8"></div>
<div class="a" style="left:11px;top:223px;width:23px;height:1px;background:#fff"></div>
<div class="a" style="left:11px;top:223px;width:1px;height:17px;background:#fff"></div>
<div class="a" style="left:11px;top:240px;width:23px;height:1px;background:#000"></div>
<div class="a" style="left:34px;top:222px;width:1px;height:19px;background:#000"></div>
<div class="a" style="left:12px;top:226px;width:11px;height:12px;background:#fff;border-top:1px solid #ACA899;border-left:1px solid #ACA899;box-shadow:inset 1px 1px #716F64"></div>
<div class="a" style="left:35px;top:240px;width:346px;height:1px;background:#D4D0C8"></div>
<div class="a" style="left:85px;top:223px;width:1px;height:17px;background:#D4D0C8"></div>
<div class="a" style="left:120px;top:223px;width:1px;height:17px;background:#D4D0C8"></div>
<div class="a" style="left:181px;top:223px;width:1px;height:17px;background:#D4D0C8"></div>
<div class="a" style="left:232px;top:223px;width:1px;height:17px;background:#D4D0C8"></div>
<div class="a" style="left:290px;top:223px;width:1px;height:17px;background:#D4D0C8"></div>
<div class="a" style="left:341px;top:223px;width:1px;height:17px;background:#D4D0C8"></div>
<div class="a t" style="left:36.5px;top:226px;">RK5</div>
<div class="a t" style="left:37px;top:226px;width:80px;text-align:right">3</div>
<div class="a t" style="left:97.30000000000001px;top:226px;width:80px;text-align:right">503.00</div>
<div class="a t" style="left:206px;top:226px;width:80px;text-align:right">78.59</div>
<div class="a t" style="left:257px;top:226px;width:80px;text-align:right">292.00</div>
<div class="a" style="left:11px;top:241px;width:23px;height:17px;background:#ECE9D8"></div>
<div class="a" style="left:11px;top:241px;width:23px;height:1px;background:#fff"></div>
<div class="a" style="left:11px;top:241px;width:1px;height:17px;background:#fff"></div>
<div class="a" style="left:11px;top:258px;width:23px;height:1px;background:#000"></div>
<div class="a" style="left:34px;top:240px;width:1px;height:19px;background:#000"></div>
<div class="a" style="left:12px;top:244px;width:11px;height:12px;background:#fff;border-top:1px solid #ACA899;border-left:1px solid #ACA899;box-shadow:inset 1px 1px #716F64"></div>
<div class="a" style="left:35px;top:258px;width:346px;height:1px;background:#D4D0C8"></div>
<div class="a" style="left:85px;top:241px;width:1px;height:17px;background:#D4D0C8"></div>
<div class="a" style="left:120px;top:241px;width:1px;height:17px;background:#D4D0C8"></div>
<div class="a" style="left:181px;top:241px;width:1px;height:17px;background:#D4D0C8"></div>
<div class="a" style="left:232px;top:241px;width:1px;height:17px;background:#D4D0C8"></div>
<div class="a" style="left:290px;top:241px;width:1px;height:17px;background:#D4D0C8"></div>
<div class="a" style="left:341px;top:241px;width:1px;height:17px;background:#D4D0C8"></div>
<div class="a t" style="left:36.5px;top:244px;">RK5</div>
<div class="a t" style="left:37px;top:244px;width:80px;text-align:right">3</div>
<div class="a t" style="left:97.30000000000001px;top:244px;width:80px;text-align:right">704.00</div>
<div class="a t" style="left:206px;top:244px;width:80px;text-align:right">85.29</div>
<div class="a t" style="left:257px;top:244px;width:80px;text-align:right">298.00</div>
<div class="a" style="left:11px;top:259px;width:23px;height:17px;background:#ECE9D8"></div>
<div class="a" style="left:11px;top:259px;width:23px;height:1px;background:#fff"></div>
<div class="a" style="left:11px;top:259px;width:1px;height:17px;background:#fff"></div>
<div class="a" style="left:11px;top:276px;width:23px;height:1px;background:#000"></div>
<div class="a" style="left:34px;top:258px;width:1px;height:19px;background:#000"></div>
<div class="a" style="left:12px;top:262px;width:11px;height:12px;background:#fff;border-top:1px solid #ACA899;border-left:1px solid #ACA899;box-shadow:inset 1px 1px #716F64"></div>
<div class="a" style="left:35px;top:276px;width:346px;height:1px;background:#D4D0C8"></div>
<div class="a" style="left:85px;top:259px;width:1px;height:17px;background:#D4D0C8"></div>
<div class="a" style="left:120px;top:259px;width:1px;height:17px;background:#D4D0C8"></div>
<div class="a" style="left:181px;top:259px;width:1px;height:17px;background:#D4D0C8"></div>
<div class="a" style="left:232px;top:259px;width:1px;height:17px;background:#D4D0C8"></div>
<div class="a" style="left:290px;top:259px;width:1px;height:17px;background:#D4D0C8"></div>
<div class="a" style="left:341px;top:259px;width:1px;height:17px;background:#D4D0C8"></div>
<div class="a t" style="left:36.5px;top:262px;">RK5</div>
<div class="a t" style="left:37px;top:262px;width:80px;text-align:right">3</div>
<div class="a t" style="left:97.30000000000001px;top:262px;width:80px;text-align:right">905.00</div>
<div class="a t" style="left:206px;top:262px;width:80px;text-align:right">93.09</div>
<div class="a t" style="left:257px;top:262px;width:80px;text-align:right">304.00</div>
<div class="a" style="left:11px;top:277px;width:23px;height:17px;background:#ECE9D8"></div>
<div class="a" style="left:11px;top:277px;width:23px;height:1px;background:#fff"></div>
<div class="a" style="left:11px;top:277px;width:1px;height:17px;background:#fff"></div>
<div class="a" style="left:11px;top:294px;width:23px;height:1px;background:#000"></div>
<div class="a" style="left:34px;top:276px;width:1px;height:19px;background:#000"></div>
<div class="a" style="left:12px;top:280px;width:11px;height:12px;background:#fff;border-top:1px solid #ACA899;border-left:1px solid #ACA899;box-shadow:inset 1px 1px #716F64"></div>
<div class="a" style="left:35px;top:294px;width:346px;height:1px;background:#D4D0C8"></div>
<div class="a" style="left:85px;top:277px;width:1px;height:17px;background:#D4D0C8"></div>
<div class="a" style="left:120px;top:277px;width:1px;height:17px;background:#D4D0C8"></div>
<div class="a" style="left:181px;top:277px;width:1px;height:17px;background:#D4D0C8"></div>
<div class="a" style="left:232px;top:277px;width:1px;height:17px;background:#D4D0C8"></div>
<div class="a" style="left:290px;top:277px;width:1px;height:17px;background:#D4D0C8"></div>
<div class="a" style="left:341px;top:277px;width:1px;height:17px;background:#D4D0C8"></div>
<div class="a t" style="left:36.5px;top:280px;">RK5</div>
<div class="a t" style="left:37px;top:280px;width:80px;text-align:right">3</div>
<div class="a t" style="left:97.30000000000001px;top:280px;width:80px;text-align:right">1106.00</div>
<div class="a t" style="left:206px;top:280px;width:80px;text-align:right">103.19</div>
<div class="a t" style="left:257px;top:280px;width:80px;text-align:right">310.00</div>
<div class="a" style="left:11px;top:295px;width:23px;height:17px;background:#ECE9D8"></div>
<div class="a" style="left:11px;top:295px;width:23px;height:1px;background:#fff"></div>
<div class="a" style="left:11px;top:295px;width:1px;height:17px;background:#fff"></div>
<div class="a" style="left:11px;top:312px;width:23px;height:1px;background:#000"></div>
<div class="a" style="left:34px;top:294px;width:1px;height:19px;background:#000"></div>
<div class="a" style="left:12px;top:298px;width:11px;height:12px;background:#fff;border-top:1px solid #ACA899;border-left:1px solid #ACA899;box-shadow:inset 1px 1px #716F64"></div>
<div class="a" style="left:35px;top:312px;width:346px;height:1px;background:#D4D0C8"></div>
<div class="a" style="left:85px;top:295px;width:1px;height:17px;background:#D4D0C8"></div>
<div class="a" style="left:120px;top:295px;width:1px;height:17px;background:#D4D0C8"></div>
<div class="a" style="left:181px;top:295px;width:1px;height:17px;background:#D4D0C8"></div>
<div class="a" style="left:232px;top:295px;width:1px;height:17px;background:#D4D0C8"></div>
<div class="a" style="left:290px;top:295px;width:1px;height:17px;background:#D4D0C8"></div>
<div class="a" style="left:341px;top:295px;width:1px;height:17px;background:#D4D0C8"></div>
<div class="a t" style="left:36.5px;top:298px;">RK5</div>
<div class="a t" style="left:37px;top:298px;width:80px;text-align:right">3</div>
<div class="a t" style="left:97.30000000000001px;top:298px;width:80px;text-align:right">1307.00</div>
<div class="a t" style="left:206px;top:298px;width:80px;text-align:right">115.29</div>
<div class="a t" style="left:257px;top:298px;width:80px;text-align:right">316.00</div>
<div class="a" style="left:11px;top:313px;width:23px;height:17px;background:#ECE9D8"></div>
<div class="a" style="left:11px;top:313px;width:23px;height:1px;background:#fff"></div>
<div class="a" style="left:11px;top:313px;width:1px;height:17px;background:#fff"></div>
<div class="a" style="left:11px;top:330px;width:23px;height:1px;background:#000"></div>
<div class="a" style="left:34px;top:312px;width:1px;height:19px;background:#000"></div>
<div class="a" style="left:12px;top:316px;width:11px;height:12px;background:#fff;border-top:1px solid #ACA899;border-left:1px solid #ACA899;box-shadow:inset 1px 1px #716F64"></div>
<div class="a" style="left:35px;top:330px;width:346px;height:1px;background:#D4D0C8"></div>
<div class="a" style="left:85px;top:313px;width:1px;height:17px;background:#D4D0C8"></div>
<div class="a" style="left:120px;top:313px;width:1px;height:17px;background:#D4D0C8"></div>
<div class="a" style="left:181px;top:313px;width:1px;height:17px;background:#D4D0C8"></div>
<div class="a" style="left:232px;top:313px;width:1px;height:17px;background:#D4D0C8"></div>
<div class="a" style="left:290px;top:313px;width:1px;height:17px;background:#D4D0C8"></div>
<div class="a" style="left:341px;top:313px;width:1px;height:17px;background:#D4D0C8"></div>
<div class="a t" style="left:36.5px;top:316px;">RK5</div>
<div class="a t" style="left:37px;top:316px;width:80px;text-align:right">3</div>
<div class="a t" style="left:97.30000000000001px;top:316px;width:80px;text-align:right">1508.00</div>
<div class="a t" style="left:206px;top:316px;width:80px;text-align:right">128.89</div>
<div class="a t" style="left:257px;top:316px;width:80px;text-align:right">316.00</div>
<div class="a" style="left:11px;top:331px;width:23px;height:17px;background:#ECE9D8"></div>
<div class="a" style="left:11px;top:331px;width:23px;height:1px;background:#fff"></div>
<div class="a" style="left:11px;top:331px;width:1px;height:17px;background:#fff"></div>
<div class="a" style="left:11px;top:348px;width:23px;height:1px;background:#000"></div>
<div class="a" style="left:34px;top:330px;width:1px;height:19px;background:#000"></div>
<div class="a" style="left:12px;top:334px;width:11px;height:12px;background:#fff;border-top:1px solid #ACA899;border-left:1px solid #ACA899;box-shadow:inset 1px 1px #716F64"></div>
<div class="a" style="left:35px;top:348px;width:346px;height:1px;background:#D4D0C8"></div>
<div class="a" style="left:85px;top:331px;width:1px;height:17px;background:#D4D0C8"></div>
<div class="a" style="left:120px;top:331px;width:1px;height:17px;background:#D4D0C8"></div>
<div class="a" style="left:181px;top:331px;width:1px;height:17px;background:#D4D0C8"></div>
<div class="a" style="left:232px;top:331px;width:1px;height:17px;background:#D4D0C8"></div>
<div class="a" style="left:290px;top:331px;width:1px;height:17px;background:#D4D0C8"></div>
<div class="a" style="left:341px;top:331px;width:1px;height:17px;background:#D4D0C8"></div>
<div class="a t" style="left:36.5px;top:334px;">RK5</div>
<div class="a t" style="left:37px;top:334px;width:80px;text-align:right">3</div>
<div class="a t" style="left:97.30000000000001px;top:334px;width:80px;text-align:right">1659.00</div>
<div class="a t" style="left:206px;top:334px;width:80px;text-align:right">139.19</div>
<div class="a t" style="left:257px;top:334px;width:80px;text-align:right">317.00</div>
<div class="a" style="left:11px;top:349px;width:23px;height:17px;background:#ECE9D8"></div>
<div class="a" style="left:11px;top:349px;width:23px;height:1px;background:#fff"></div>
<div class="a" style="left:11px;top:349px;width:1px;height:17px;background:#fff"></div>
<div class="a" style="left:11px;top:366px;width:23px;height:1px;background:#000"></div>
<div class="a" style="left:34px;top:348px;width:1px;height:19px;background:#000"></div>
<div class="a" style="left:12px;top:352px;width:11px;height:12px;background:#fff;border-top:1px solid #ACA899;border-left:1px solid #ACA899;box-shadow:inset 1px 1px #716F64"></div>
<div class="a" style="left:35px;top:366px;width:346px;height:1px;background:#D4D0C8"></div>
<div class="a" style="left:85px;top:349px;width:1px;height:17px;background:#D4D0C8"></div>
<div class="a" style="left:120px;top:349px;width:1px;height:17px;background:#D4D0C8"></div>
<div class="a" style="left:181px;top:349px;width:1px;height:17px;background:#D4D0C8"></div>
<div class="a" style="left:232px;top:349px;width:1px;height:17px;background:#D4D0C8"></div>
<div class="a" style="left:290px;top:349px;width:1px;height:17px;background:#D4D0C8"></div>
<div class="a" style="left:341px;top:349px;width:1px;height:17px;background:#D4D0C8"></div>
<div class="a t" style="left:36.5px;top:352px;">RK5</div>
<div class="a t" style="left:37px;top:352px;width:80px;text-align:right">3</div>
<div class="a t" style="left:97.30000000000001px;top:352px;width:80px;text-align:right">1800.00</div>
<div class="a t" style="left:257px;top:352px;width:80px;text-align:right">317.00</div>
<div class="a" style="left:11px;top:367px;width:23px;height:17px;background:#ECE9D8"></div>
<div class="a" style="left:11px;top:367px;width:23px;height:1px;background:#fff"></div>
<div class="a" style="left:11px;top:367px;width:1px;height:17px;background:#fff"></div>
<div class="a" style="left:11px;top:384px;width:23px;height:1px;background:#000"></div>
<div class="a" style="left:34px;top:366px;width:1px;height:19px;background:#000"></div>
<div class="a" style="left:12px;top:370px;width:11px;height:12px;background:#fff;border-top:1px solid #ACA899;border-left:1px solid #ACA899;box-shadow:inset 1px 1px #716F64"></div>
<div class="a" style="left:35px;top:384px;width:346px;height:1px;background:#D4D0C8"></div>
<div class="a" style="left:85px;top:367px;width:1px;height:17px;background:#D4D0C8"></div>
<div class="a" style="left:120px;top:367px;width:1px;height:17px;background:#D4D0C8"></div>
<div class="a" style="left:181px;top:367px;width:1px;height:17px;background:#D4D0C8"></div>
<div class="a" style="left:232px;top:367px;width:1px;height:17px;background:#D4D0C8"></div>
<div class="a" style="left:290px;top:367px;width:1px;height:17px;background:#D4D0C8"></div>
<div class="a" style="left:341px;top:367px;width:1px;height:17px;background:#D4D0C8"></div>
<div class="a t" style="left:36.5px;top:370px;">RK5</div>
<div class="a t" style="left:37px;top:370px;width:80px;text-align:right">3</div>
<div class="a t" style="left:97.30000000000001px;top:370px;width:80px;text-align:right">1900.00</div>
<div class="a t" style="left:257px;top:370px;width:80px;text-align:right">317.00</div>
<div class="a" style="left:381px;top:124px;width:18px;height:287px;background:linear-gradient(to right,#F3F1EC,#FEFEFB 60%,#F3F1EC)"></div>
<div class="a" style="left:382px;top:124px;width:16px;height:17px;border:1px solid #fff;border-radius:2px;background:linear-gradient(135deg,#C8D8FB,#B6CBF8 50%,#A8C0F5);box-shadow:inset -1px -1px #9CB5EC"></div>
<svg class="a" style="left:382px;top:124px" width="16" height="17"><polyline points="4,10 8,6 12,10" fill="none" stroke="#4D6185" stroke-width="2"/></svg>
<div class="a" style="left:382px;top:141px;width:16px;height:82px;border:1px solid #fff;border-radius:2px;background:linear-gradient(to right,#BFD1FA,#CCDAFB 50%,#BFD1FA);box-shadow:inset -1px -1px #A6BEF2"></div>
<svg class="a" style="left:382px;top:176px" width="16" height="10" shape-rendering="crispEdges"><g fill="#EEF4FE"><rect x="5" y="1" width="6" height="1"/><rect x="5" y="3" width="6" height="1"/><rect x="5" y="5" width="6" height="1"/><rect x="5" y="7" width="6" height="1"/></g><g fill="#8CB0F8"><rect x="6" y="2" width="6" height="1"/><rect x="6" y="4" width="6" height="1"/><rect x="6" y="6" width="6" height="1"/><rect x="6" y="8" width="6" height="1"/></g></svg>
<div class="a" style="left:382px;top:376px;width:16px;height:16px;border:1px solid #fff;border-radius:2px;background:linear-gradient(135deg,#C8D8FB,#B6CBF8 50%,#A8C0F5);box-shadow:inset -1px -1px #9CB5EC"></div>
<svg class="a" style="left:382px;top:376px" width="16" height="16"><polyline points="4,6 8,10 12,6" fill="none" stroke="#4D6185" stroke-width="2"/></svg>
<div class="a" style="left:11px;top:393px;width:370px;height:18px;background:linear-gradient(to bottom,#F3F1EC,#FEFEFB 60%,#F3F1EC)"></div>
<div class="a" style="left:11px;top:394px;width:16px;height:16px;border:1px solid #fff;border-radius:2px;background:linear-gradient(135deg,#C8D8FB,#B6CBF8 50%,#A8C0F5);box-shadow:inset -1px -1px #9CB5EC"></div>
<svg class="a" style="left:11px;top:394px" width="16" height="16"><polyline points="10,4 6,8 10,12" fill="none" stroke="#4D6185" stroke-width="2"/></svg>
<div class="a" style="left:28px;top:394px;width:17px;height:16px;border:1px solid #fff;border-radius:2px;background:linear-gradient(to bottom,#BFD1FA,#CCDAFB 50%,#BFD1FA);box-shadow:inset -1px -1px #A6BEF2"></div>
<svg class="a" style="left:28px;top:394px" width="17" height="16" shape-rendering="crispEdges"><g fill="#EEF4FE"><rect x="5" y="5" width="1" height="6"/><rect x="7" y="5" width="1" height="6"/><rect x="9" y="5" width="1" height="6"/><rect x="11" y="5" width="1" height="6"/></g><g fill="#8CB0F8"><rect x="6" y="6" width="1" height="6"/><rect x="8" y="6" width="1" height="6"/><rect x="10" y="6" width="1" height="6"/><rect x="12" y="6" width="1" height="6"/></g></svg>
<div class="a" style="left:364px;top:394px;width:16px;height:16px;border:1px solid #fff;border-radius:2px;background:linear-gradient(135deg,#C8D8FB,#B6CBF8 50%,#A8C0F5);box-shadow:inset -1px -1px #9CB5EC"></div>
<svg class="a" style="left:364px;top:394px" width="16" height="16"><polyline points="6,4 10,8 6,12" fill="none" stroke="#4D6185" stroke-width="2"/></svg>
<div class="a" style="left:381px;top:393px;width:18px;height:18px;background:#ECE9D8"></div>
<div class="a" style="left:9px;top:414px;width:89px;height:17px;border-top:1px solid #ACA899;border-left:1px solid #ACA899;border-right:1px solid #fff;border-bottom:1px solid #fff"></div>
<div class="a t" style="left:11px;top:417px;font-size:10.6px">Records: 23</div>
<div class="a" style="left:100px;top:414px;width:61px;height:17px;border-top:1px solid #ACA899;border-left:1px solid #ACA899;border-right:1px solid #fff;border-bottom:1px solid #fff"></div>
<div class="a t" style="left:102px;top:417px;font-size:10.6px">Series: 2</div>
<div class="a" style="left:162px;top:414px;width:238px;height:17px;border-top:1px solid #ACA899;border-left:1px solid #ACA899;border-right:1px solid #fff;border-bottom:1px solid #fff"></div>
<div class="a t" style="left:164px;top:417px;font-size:10.6px">ID: &quot;WELLNAME&quot;, &quot;ID&quot;</div><div class="a" style="left:406px;top:97px;width:3px;height:339px;background:#fff"></div>
<div class="a" style="left:407px;top:99px;width:545px;height:1px;background:#fff"></div>
<div class="a" style="left:951px;top:99px;width:1px;height:336px;background:#ACA899"></div>
<div class="a" style="left:952px;top:98px;width:1px;height:338px;background:#716F64"></div>
<div class="a" style="left:408px;top:434px;width:544px;height:1px;background:#ACA899"></div>
<div class="a" style="left:406px;top:435px;width:547px;height:1px;background:#716F64"></div>
<svg class="a" style="left:412px;top:103px" width="537" height="329" viewBox="412 103 537 329">
<rect x="412" y="103" width="537" height="329" fill="#fff"/>
<text x="680.5" y="135" font-family="Liberation Sans" font-size="19.2" text-anchor="middle" stroke="#000" stroke-width="0.55">Measured Discharge Profiles</text>
<text x="705.5" y="156.7" font-family="Liberation Sans" font-size="10.7" text-anchor="middle">Temperature [deg C]</text>
<text x="706" y="384.6" font-family="Liberation Sans" font-size="10.7" text-anchor="middle">Pressure [barg]</text>
<text transform="translate(441.3 266.7) rotate(-90)" font-family="Liberation Sans" font-size="10.9" text-anchor="middle">Vertical Depth [m]</text>
<path d="M504.5,182V353.5M529.5,182V353.5M554.5,182V353.5M580.5,182V353.5M605.5,182V353.5M630.5,182V353.5M655.5,182V353.5M681.5,182V353.5M706.5,182V353.5M731.5,182V353.5M756.5,182V353.5M781.5,182V353.5M807.5,182V353.5M832.5,182V353.5M857.5,182V353.5M882.5,182V353.5M908.5,182V353.5M504.5,182V353.5M548.5,182V353.5M591.5,182V353.5M635.5,182V353.5M679.5,182V353.5M723.5,182V353.5M767.5,182V353.5M810.5,182V353.5M854.5,182V353.5M898.5,182V353.5M480,197.5H933.5M480,213.5H933.5M480,230.5H933.5M480,246.5H933.5M480,263.5H933.5M480,279.5H933.5M480,296.5H933.5M480,312.5H933.5M480,329.5H933.5M480,345.5H933.5" stroke="#808080" stroke-width="1" stroke-dasharray="3 3" fill="none" shape-rendering="crispEdges"/>
<path d="M479.5,177V180M504.5,177V180M529.5,177V180M554.5,177V180M580.5,177V180M605.5,177V180M630.5,177V180M655.5,177V180M681.5,177V180M706.5,177V180M731.5,177V180M756.5,177V180M781.5,177V180M807.5,177V180M832.5,177V180M857.5,177V180M882.5,177V180M908.5,177V180M933.5,177V180M484.5,178V180M489.5,178V180M494.5,178V180M499.5,178V180M509.5,178V180M514.5,178V180M519.5,178V180M524.5,178V180M534.5,178V180M539.5,178V180M544.5,178V180M549.5,178V180M560.5,178V180M565.5,178V180M570.5,178V180M575.5,178V180M585.5,178V180M590.5,178V180M595.5,178V180M600.5,178V180M610.5,178V180M615.5,178V180M620.5,178V180M625.5,178V180M635.5,178V180M640.5,178V180M645.5,178V180M650.5,178V180M660.5,178V180M665.5,178V180M670.5,178V180M676.5,178V180M686.5,178V180M691.5,178V180M696.5,178V180M701.5,178V180M711.5,178V180M716.5,178V180M721.5,178V180M726.5,178V180M736.5,178V180M741.5,178V180M746.5,178V180M751.5,178V180M761.5,178V180M766.5,178V180M771.5,178V180M776.5,178V180M786.5,178V180M792.5,178V180M797.5,178V180M802.5,178V180M812.5,178V180M817.5,178V180M822.5,178V180M827.5,178V180M837.5,178V180M842.5,178V180M847.5,178V180M852.5,178V180M862.5,178V180M867.5,178V180M872.5,178V180M877.5,178V180M887.5,178V180M892.5,178V180M897.5,178V180M902.5,178V180M913.5,178V180M918.5,178V180M923.5,178V180M928.5,178V180M504.5,354V358M548.5,354V358M591.5,354V358M635.5,354V358M679.5,354V358M723.5,354V358M767.5,354V358M810.5,354V358M854.5,354V358M898.5,354V358M478.5,354V356M486.5,354V356M495.5,354V356M513.5,354V356M521.5,354V356M530.5,354V356M539.5,354V356M556.5,354V356M565.5,354V356M574.5,354V356M583.5,354V356M600.5,354V356M609.5,354V356M618.5,354V356M626.5,354V356M644.5,354V356M653.5,354V356M662.5,354V356M670.5,354V356M688.5,354V356M697.5,354V356M705.5,354V356M714.5,354V356M732.5,354V356M740.5,354V356M749.5,354V356M758.5,354V356M775.5,354V356M784.5,354V356M793.5,354V356M802.5,354V356M819.5,354V356M828.5,354V356M837.5,354V356M845.5,354V356M863.5,354V356M872.5,354V356M880.5,354V356M889.5,354V356M907.5,354V356M915.5,354V356M924.5,354V356M933.5,354V356M474,180.5H478M474,197.5H478M474,213.5H478M474,230.5H478M474,246.5H478M474,263.5H478M474,279.5H478M474,296.5H478M474,312.5H478M474,329.5H478M474,345.5H478M477,184.5H478M477,187.5H478M477,190.5H478M477,194.5H478M477,200.5H478M477,203.5H478M477,207.5H478M477,210.5H478M477,217.5H478M477,220.5H478M477,223.5H478M477,227.5H478M477,233.5H478M477,236.5H478M477,240.5H478M477,243.5H478M477,250.5H478M477,253.5H478M477,256.5H478M477,260.5H478M477,266.5H478M477,269.5H478M477,273.5H478M477,276.5H478M477,283.5H478M477,286.5H478M477,289.5H478M477,293.5H478M477,299.5H478M477,302.5H478M477,306.5H478M477,309.5H478M477,316.5H478M477,319.5H478M477,322.5H478M477,326.5H478M477,332.5H478M477,335.5H478M477,339.5H478M477,342.5H478M477,349.5H478M477,352.5H478" stroke="#808080" stroke-width="1" fill="none" shape-rendering="crispEdges"/>
<text x="479.3" y="170.5" font-family="Liberation Sans" font-size="10.7" text-anchor="middle">282</text>
<text x="504.5" y="170.5" font-family="Liberation Sans" font-size="10.7" text-anchor="middle">284</text>
<text x="529.7" y="170.5" font-family="Liberation Sans" font-size="10.7" text-anchor="middle">286</text>
<text x="555.0" y="170.5" font-family="Liberation Sans" font-size="10.7" text-anchor="middle">288</text>
<text x="580.2" y="170.5" font-family="Liberation Sans" font-size="10.7" text-anchor="middle">290</text>
<text x="605.4" y="170.5" font-family="Liberation Sans" font-size="10.7" text-anchor="middle">292</text>
<text x="630.6" y="170.5" font-family="Liberation Sans" font-size="10.7" text-anchor="middle">294</text>
<text x="655.8" y="170.5" font-family="Liberation Sans" font-size="10.7" text-anchor="middle">296</text>
<text x="681.1" y="170.5" font-family="Liberation Sans" font-size="10.7" text-anchor="middle">298</text>
<text x="706.3" y="170.5" font-family="Liberation Sans" font-size="10.7" text-anchor="middle">300</text>
<text x="731.5" y="170.5" font-family="Liberation Sans" font-size="10.7" text-anchor="middle">302</text>
<text x="756.7" y="170.5" font-family="Liberation Sans" font-size="10.7" text-anchor="middle">304</text>
<text x="781.9" y="170.5" font-family="Liberation Sans" font-size="10.7" text-anchor="middle">306</text>
<text x="807.2" y="170.5" font-family="Liberation Sans" font-size="10.7" text-anchor="middle">308</text>
<text x="832.4" y="170.5" font-family="Liberation Sans" font-size="10.7" text-anchor="middle">310</text>
<text x="857.6" y="170.5" font-family="Liberation Sans" font-size="10.7" text-anchor="middle">312</text>
<text x="882.8" y="170.5" font-family="Liberation Sans" font-size="10.7" text-anchor="middle">314</text>
<text x="908.0" y="170.5" font-family="Liberation Sans" font-size="10.7" text-anchor="middle">316</text>
<text x="933.3" y="170.5" font-family="Liberation Sans" font-size="10.7" text-anchor="middle">318</text>
<text x="504.4" y="370.5" font-family="Liberation Sans" font-size="10.7" text-anchor="middle">70</text>
<text x="548.2" y="370.5" font-family="Liberation Sans" font-size="10.7" text-anchor="middle">80</text>
<text x="592.0" y="370.5" font-family="Liberation Sans" font-size="10.7" text-anchor="middle">90</text>
<text x="635.7" y="370.5" font-family="Liberation Sans" font-size="10.7" text-anchor="middle">100</text>
<text x="679.5" y="370.5" font-family="Liberation Sans" font-size="10.7" text-anchor="middle">110</text>
<text x="723.3" y="370.5" font-family="Liberation Sans" font-size="10.7" text-anchor="middle">120</text>
<text x="767.1" y="370.5" font-family="Liberation Sans" font-size="10.7" text-anchor="middle">130</text>
<text x="810.9" y="370.5" font-family="Liberation Sans" font-size="10.7" text-anchor="middle">140</text>
<text x="854.6" y="370.5" font-family="Liberation Sans" font-size="10.7" text-anchor="middle">150</text>
<text x="898.4" y="370.5" font-family="Liberation Sans" font-size="10.7" text-anchor="middle">160</text>
<text x="471.8" y="184.4" font-family="Liberation Sans" font-size="10.7" text-anchor="end">0</text>
<text x="471.8" y="200.9" font-family="Liberation Sans" font-size="10.7" text-anchor="end">200</text>
<text x="471.8" y="217.4" font-family="Liberation Sans" font-size="10.7" text-anchor="end">400</text>
<text x="471.8" y="233.9" font-family="Liberation Sans" font-size="10.7" text-anchor="end">600</text>
<text x="471.8" y="250.4" font-family="Liberation Sans" font-size="10.7" text-anchor="end">800</text>
<text x="471.8" y="266.9" font-family="Liberation Sans" font-size="10.7" text-anchor="end">1,000</text>
<text x="471.8" y="283.4" font-family="Liberation Sans" font-size="10.7" text-anchor="end">1,200</text>
<text x="471.8" y="299.9" font-family="Liberation Sans" font-size="10.7" text-anchor="end">1,400</text>
<text x="471.8" y="316.4" font-family="Liberation Sans" font-size="10.7" text-anchor="end">1,600</text>
<text x="471.8" y="332.9" font-family="Liberation Sans" font-size="10.7" text-anchor="end">1,800</text>
<text x="471.8" y="349.4" font-family="Liberation Sans" font-size="10.7" text-anchor="end">2,000</text>
<polyline points="479.0,180.8 493.0,189.1 516.2,205.7 542.0,222.3 571.3,238.9 605.5,255.5 649.7,272.0 702.7,288.6 762.2,305.2 807.3,317.7 933.0,352.5" fill="none" stroke="#000" stroke-width="1" shape-rendering="crispEdges"/>
<polyline points="491.9,189.1 555.0,205.7 605.4,222.3 681.1,238.9 756.7,255.5 832.4,272.0 908.0,288.6 908.0,305.2 920.6,317.7 920.6,329.3 920.6,337.6 920.6,345.8 933.0,352.5" fill="none" stroke="#FF0000" stroke-width="1" shape-rendering="crispEdges"/>
<polyline points="493.0,189.1 516.2,206.3 541.0,223.3 569.8,239.9 601.0,255.5 642.0,272.0 694.2,288.6 751.5,305.2 795.0,317.5" fill="none" stroke="#0000FF" stroke-width="1" shape-rendering="crispEdges"/>
<polyline points="479.8,189.8 538.4,205.7 599.9,222.3 655.0,239.1 735.3,255.5 817.0,272.0 896.5,288.4 920.5,305.0 920.5,317.0" fill="none" stroke="#00FF00" stroke-width="1" shape-rendering="crispEdges"/>
<path d="M933.5,180V354.0" stroke="#000" stroke-width="1.2" fill="none"/>
<rect x="478" y="180" width="456.0" height="2" fill="#000"/>
<rect x="478" y="352" width="456.0" height="2" fill="#000"/>
<rect x="478" y="180" width="2" height="174" fill="#000"/>
<rect x="437.5" y="398.5" width="493" height="18" fill="none" stroke="#000" stroke-width="1" shape-rendering="crispEdges"/>
<rect x="443" y="407" width="19" height="1" fill="#000"/>
<text x="468.6" y="410.8" font-family="Liberation Sans" font-size="10.7">RK5 3 Pressure</text>
<rect x="565" y="407" width="19" height="1" fill="#FF0000"/>
<text x="590.3" y="410.8" font-family="Liberation Sans" font-size="10.7">RK5 3 Temperature</text>
<rect x="687" y="407" width="19" height="1" fill="#0000FF"/>
<text x="712.6" y="410.8" font-family="Liberation Sans" font-size="10.7">RK5 4 Pressure</text>
<rect x="809" y="407" width="19" height="1" fill="#00FF00"/>
<text x="835" y="410.8" font-family="Liberation Sans" font-size="10.7">RK5 4 Temperature</text>
</svg></body></html>
